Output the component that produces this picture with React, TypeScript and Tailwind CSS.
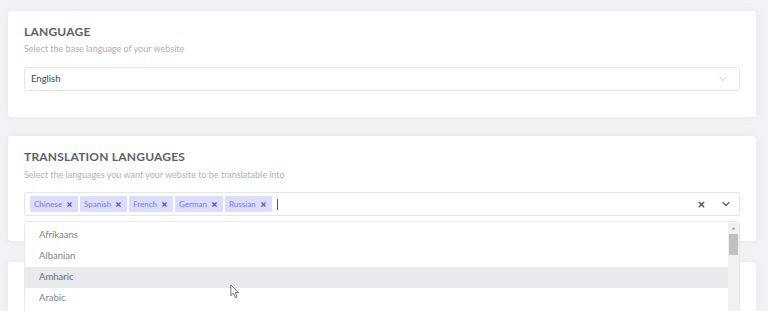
import { ChevronDown, X } from "lucide-react"

const tags = ["Chinese", "Spanish", "French", "German", "Russian"]
const options = ["Afrikaans", "Albanian", "Amharic", "Arabic"]

function Card({ children, className = "" }: { children?: React.ReactNode; className?: string }) {
  return (
    <div className={"bg-white rounded-[3px] shadow-[0_0_6px_rgba(200,205,220,0.25)] " + className}>
      {children}
    </div>
  )
}

function Heading({ title, sub, gap }: { title: string; sub: string; gap: string }) {
  return (
    <>
      <h2 className="text-[12px] leading-[16px] font-bold tracking-[0.2px] text-[#5d6167]">{title}</h2>
      <p className={"text-[9px] leading-[12px] text-[#aeb1b7] " + gap}>{sub}</p>
    </>
  )
}

export default function App() {
  return (
    <div
      className="h-[311px] overflow-hidden bg-[#f2f3f7] pl-2 pr-3 pt-[11px]"
      style={{ fontFamily: "Lato, 'Open Sans', sans-serif" }}
    >
      <Card className="px-4 pt-[13px] pb-[26px]">
        <Heading title="LANGUAGE" sub="Select the base language of your website" gap="mt-[3px]" />
        <div className="mt-[12px] h-6 flex items-center justify-between border border-[#e4e5e9] rounded-[3px] pl-[6px] pr-[10px]">
          <span className="text-[9.5px] text-[#454545]">English</span>
          <ChevronDown className="w-3 h-3 text-[#c4c4c4]" strokeWidth={2} />
        </div>
      </Card>

      <Card className="mt-[19px] px-4 pt-[13px] pb-[25px] relative z-10">
        <Heading title="TRANSLATION LANGUAGES" sub="Select the languages you want your website to be translatable into" gap="mt-[4px]" />
        <div className="relative mt-[11px]">
          <div className="h-6 flex items-center border border-[#e4e5e9] rounded-[3px] pl-[5px] pr-[7px]">
            <div className="flex items-center gap-[2px] flex-1">
              {tags.map((t) => (
                <span
                  key={t}
                  className="h-4 flex items-center gap-[4px] bg-[#dcdcfd] rounded-[1px] pl-[4px] pr-[5px] text-[8px] text-[#7a7ae6]"
                >
                  {t}
                  <X className="w-[7px] h-[7px] text-[#5a5ad8]" strokeWidth={4} />
                </span>
              ))}
              <span className="ml-[3px] w-px h-[11px] bg-[#555]" />
            </div>
            <X className="w-[9px] h-[9px] text-[#555]" strokeWidth={4} />
            <ChevronDown className="ml-[14px] w-3 h-3 text-[#666]" strokeWidth={2.5} />
          </div>

          <div className="absolute left-0 right-0 top-full mt-[5px] h-[110px] bg-white border border-[#e7e8ec] rounded-[3px] flex overflow-hidden">
            <ul className="flex-1 pt-[3px]">
              {options.map((o) => (
                <li
                  key={o}
                  className={
                    "h-[21px] flex items-center pl-[14px] text-[9.5px] " +
                    (o === "Amharic" ? "bg-[#e8eaed] text-[#6a6a6a]" : "text-[#828282]")
                  }
                >
                  {o}
                </li>
              ))}
            </ul>
            <div className="w-[11px] bg-[#f1f1f1] flex flex-col items-center">
              <svg viewBox="0 0 10 10" className="w-[5px] h-[5px] mt-[4px] mb-[3px]">
                <path d="M1 7 L5 2 L9 7 Z" fill="#a3a3a3" />
              </svg>
              <div className="w-[9px] h-[21px] bg-[#c1c1c1]" />
            </div>
          </div>

          <svg viewBox="0 0 12 18" className="absolute left-[206px] top-[92px] w-[10px] h-[15px] z-20">
            <path d="M1 1 L1 14 L4.2 11 L6.5 16.5 L8.5 15.6 L6.3 10.3 L10.5 10.3 Z" fill="#fff" stroke="#555" strokeWidth="1" strokeLinejoin="round" />
          </svg>
        </div>
      </Card>

      <Card className="mt-[21px] h-[120px]" />
    </div>
  )
}
